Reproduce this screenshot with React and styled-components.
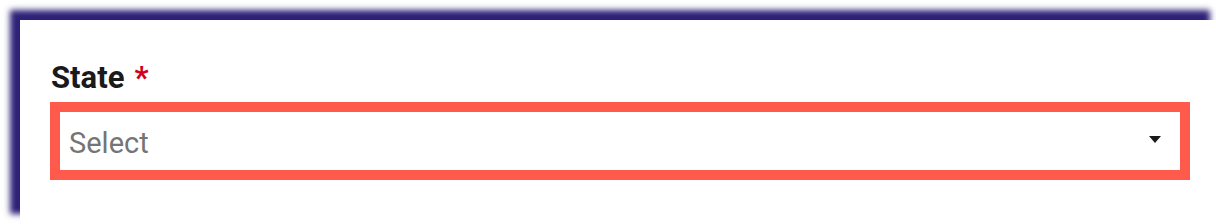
import React from "react";
import styled, { createGlobalStyle } from "styled-components";

const GlobalStyle = createGlobalStyle`
  html, body {
    margin: 0;
    padding: 0;
    background: #ffffff;
    overflow: hidden;
  }
  body {
    font-family: Roboto, "Liberation Sans", Arial, sans-serif;
  }
  * { box-sizing: border-box; }
`;

const Page = styled.div`
  padding: 20px 0 0 20px;
  width: 1216px;
  height: 224px;
`;

const Panel = styled.section`
  width: 1200px;
  height: 204px;
  background: #ffffff;
  box-shadow: -10px -10px 6px #2e2278;
  padding: 41px 30px 0 30px;
  display: flex;
  flex-direction: column;
`;

const Label = styled.label`
  display: block;
  font-family: Roboto, "Liberation Sans", Arial, sans-serif;
  font-weight: 700;
  font-size: 31px;
  line-height: 34px;
  color: #1a1a1a;
  margin: 0 0 7px 1px;
`;

const Required = styled.span`
  color: #d0021b;
  margin-left: 10px;
`;

const SelectBox = styled.div`
  width: 1140px;
  height: 78px;
  border: 10px solid #ff5a4c;
  display: flex;
  align-items: center;
  padding: 0 19px 0 9px;
  background: #ffffff;
  cursor: pointer;
`;

const Placeholder = styled.span`
  flex: 1;
  font-family: Roboto, "Liberation Sans", Arial, sans-serif;
  font-size: 29px;
  color: #757575;
  padding-top: 4px;
`;

const Caret = styled.svg`
  width: 12px;
  height: 7px;
  margin-top: -3px;
  flex: none;
`;

export default function App() {
  return (
    <>
      <GlobalStyle />
      <Page>
        <Panel>
          <Label>
            State<Required>*</Required>
          </Label>
          <SelectBox role="combobox" aria-expanded="false">
            <Placeholder>Select</Placeholder>
            <Caret viewBox="0 0 12 7" aria-hidden="true">
              <path d="M0 0 L12 0 L6 7 Z" fill="#1a1a1a" />
            </Caret>
          </SelectBox>
        </Panel>
      </Page>
    </>
  );
}
